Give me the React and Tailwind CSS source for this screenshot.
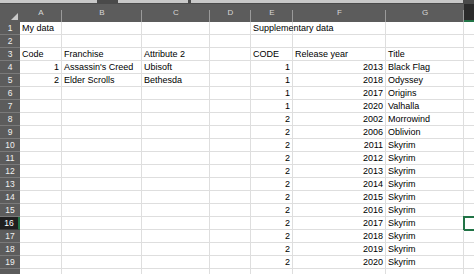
const cols = ['A', 'B', 'C', 'D', 'E', 'F', 'G', 'H'];
const widths = ['w-[42px]', 'w-[80px]', 'w-[68px]', 'w-[41px]', 'w-[42px]', 'w-[93px]', 'w-[78px]', 'w-[12px]'];

const rows = [
  ['My data', '', '', '', 'Supplementary data', '', ''],
  ['', '', '', '', '', '', ''],
  ['Code', 'Franchise', 'Attribute 2', '', 'CODE', 'Release year', 'Title'],
  [1, "Assassin's Creed", 'Ubisoft', '', 1, 2013, 'Black Flag'],
  [2, 'Elder Scrolls', 'Bethesda', '', 1, 2018, 'Odyssey'],
  ['', '', '', '', 1, 2017, 'Origins'],
  ['', '', '', '', 1, 2020, 'Valhalla'],
  ['', '', '', '', 2, 2002, 'Morrowind'],
  ['', '', '', '', 2, 2006, 'Oblivion'],
  ...[2011, 2012, 2013, 2014, 2015, 2016, 2017, 2018, 2019, 2020].map((y) => ['', '', '', '', 2, y, 'Skyrim']),
  ['', '', '', '', '', '', ''],
];

function Cell({ value, width, active }) {
  const isNum = typeof value === 'number';
  return (
    <div
      className={`${width} shrink-0 h-[13px] border-r border-b border-[#dedede] px-[2px] leading-[12px] whitespace-nowrap overflow-visible ${
        isNum ? 'text-right' : 'text-left'
      } ${active ? 'outline-2 outline-[#217346] -outline-offset-1' : ''}`}
    >
      {value}
    </div>
  );
}

export default function App() {
  return (
    <div className="w-[474px] h-[274px] overflow-hidden bg-white font-['Liberation_Sans',sans-serif] text-[9px] text-black">
      <div className="h-[4px] bg-[#4a4a4a] flex items-start">
        <div className="w-[97px] h-[3px] bg-[#c8c8c8]" />
        <div className="w-[70px] h-[3px] bg-[#c8c8c8] ml-[21px]" />
        <div className="w-[272px] h-[3px] bg-[#c8c8c8] ml-[3px]" />
      </div>
      <div className="h-[18px] bg-[#5c5c5c] flex text-[#d8d8d8] text-[8px]">
        <div className="w-[20px] shrink-0 relative">
          <div className="absolute right-[2px] bottom-[2px] w-0 h-0 border-l-[7px] border-l-transparent border-b-[7px] border-b-[#c9c9c9]" />
        </div>
        {cols.map((c, i) => (
          <div
            key={c}
            className={`${widths[i]} shrink-0 flex items-end justify-center pb-[3px] relative ${
              c === 'H' ? 'bg-[#2b2b2b] border-b-2 border-[#217346]' : ''
            }`}
          >
            <div className="absolute right-0 top-[6px] bottom-0 w-px bg-[#9a9a9a]" />
            {c !== 'H' && c}
          </div>
        ))}
      </div>
      {rows.map((r, ri) => {
        const n = ri + 1;
        const sel = n === 16;
        return (
          <div key={n} className="flex">
            <div
              className={`w-[20px] shrink-0 h-[13px] text-[8.5px] leading-[12px] text-center border-b ${
                sel
                  ? 'bg-[#1f1f1f] text-white border-[#3a3a3a] border-r-2 border-r-[#217346]'
                  : 'bg-[#5c5c5c] text-[#f0f0f0] border-[#7a7a7a]'
              }`}
            >
              {n < 20 ? n : ''}
            </div>
            {r.map((v, ci) => (
              <Cell key={ci} value={v} width={widths[ci]} />
            ))}
            <Cell value="" width={widths[7]} active={sel} />
          </div>
        );
      })}
    </div>
  );
}
